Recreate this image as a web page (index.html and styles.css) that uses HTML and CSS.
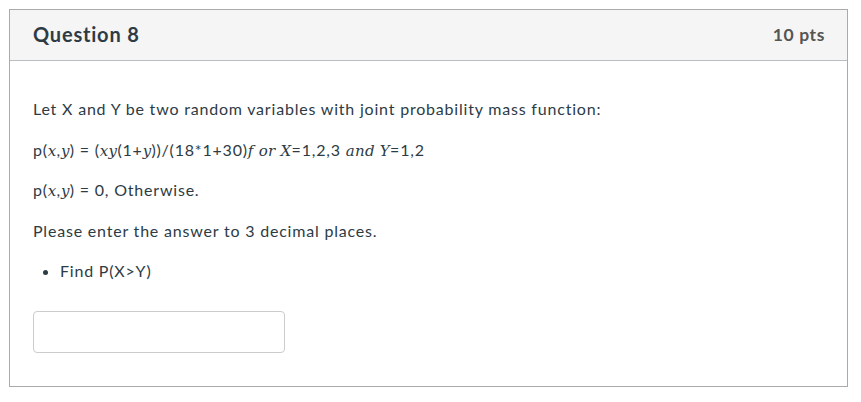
FILE: index.html
```html
<!DOCTYPE html>
<html>
<head>
<meta charset="utf-8">
<link rel="stylesheet" href="styles.css">
</head>
<body>
<div class="question">
  <div class="header">
    <span class="title">Question 8</span>
    <span class="pts">10 pts</span>
  </div>
  <div class="content">
    <p>Let X and Y be two random variables with joint probability mass function:</p>
    <p>p(<span class="m">x</span>,<span class="m">y</span>) = (<span class="m">xy</span>(1+<span class="m">y</span>))/(18*1+30)<span class="m">f or X</span>=1,2,3 <span class="m">and Y</span>=1,2</p>
    <p>p(<span class="m">x</span>,<span class="m">y</span>) = 0, Otherwise.</p>
    <p>Please enter the answer to 3 decimal places.</p>
    <ul>
      <li>Find P(X&gt;Y)</li>
    </ul>
    <div class="answer"><input type="text" class="field"></div>
  </div>
</div>
</body>
</html>
```

FILE: styles.css
```css
html, body {
  margin: 0;
  padding: 0;
  background: #fff;
}
body {
  padding: 9px 13px 0 9px;
  font-family: Lato, "Liberation Sans", sans-serif;
  color: #2d3b45;
}
.question {
  border: 1px solid #aaaaaa;
  height: 376px;
}
.header {
  box-sizing: border-box;
  height: 51px;
  background: #f5f5f5;
  border-bottom: 1px solid #b8bec2;
  display: flex;
  align-items: center;
  justify-content: space-between;
  padding: 0 22px 2px 23px;
}
.title {
  font-size: 20px;
  font-weight: 700;
  color: #2d3b45;
  letter-spacing: 0.8px;
}
.pts {
  font-size: 17.5px;
  font-weight: 700;
  color: #555555;
  letter-spacing: 0.6px;
}
.content {
  padding: 37px 23px 0 23px;
  font-size: 16px;
  letter-spacing: 0.8px;
}
.content p {
  margin: 0 0 18.5px 0;
  height: 22px;
  line-height: 22px;
  white-space: nowrap;
}
.m {
  font-family: "DejaVu Serif", serif;
  font-style: italic;
  font-size: 15px;
  line-height: 1;
  letter-spacing: 0.3px;
}
ul {
  margin: 0;
  padding-left: 27px;
  line-height: 22px;
}
.answer {
  margin-top: 29px;
}
.field {
  display: block;
  box-sizing: border-box;
  width: 252px;
  height: 42px;
  border: 1px solid #cccccc;
  border-radius: 4px;
  margin: 0;
  background: #fff;
}
```
